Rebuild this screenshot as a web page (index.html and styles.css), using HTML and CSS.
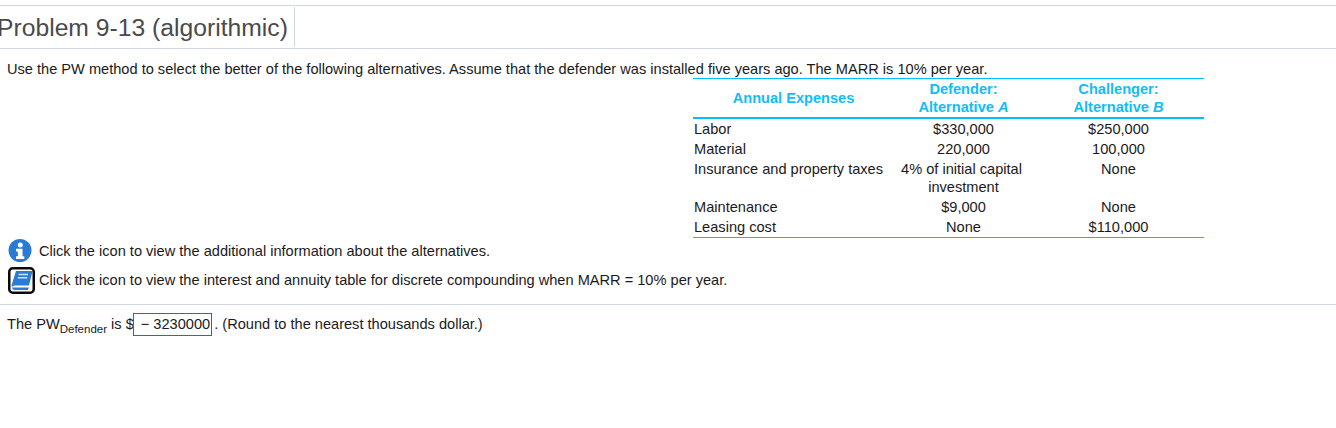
FILE: index.html
```html
<!DOCTYPE html>
<html>
<head>
<meta charset="utf-8">
<title>Problem 9-13</title>
<link rel="stylesheet" href="styles.css">
</head>
<body>
<header class="head">
  <h1 class="title">Problem 9-13 (algorithmic)</h1>
</header>
<main class="content">
  <p class="intro">Use the PW method to select the better of the following alternatives. Assume that the defender was installed five years ago. The MARR is 10% per year.</p>
  <div class="table-row">
    <table class="data">
      <thead>
        <tr>
          <th class="c1">Annual Expenses</th>
          <th class="c2">Defender:<br>Alternative <i>A</i></th>
          <th class="c3">Challenger:<br>Alternative <i>B</i></th>
        </tr>
      </thead>
      <tbody>
        <tr><td class="c1">Labor</td><td class="c2">$330,000</td><td class="c3">$250,000</td></tr>
        <tr><td class="c1">Material</td><td class="c2">220,000</td><td class="c3">100,000</td></tr>
        <tr class="tall"><td class="c1">Insurance and property taxes</td><td class="c2">4% of initial capital&nbsp;<br>investment</td><td class="c3">None</td></tr>
        <tr><td class="c1">Maintenance</td><td class="c2">$9,000</td><td class="c3">None</td></tr>
        <tr><td class="c1">Leasing cost</td><td class="c2">None</td><td class="c3">$110,000</td></tr>
      </tbody>
    </table>
  </div>
  <div class="note note-info">
    <svg class="icon" width="24" height="24" viewBox="0 0 24 24"><circle cx="12" cy="11.500" r="11.500" fill="#2a7bd4"/><circle cx="12.300" cy="6" r="2.500" fill="#fff"/><path d="M8 9.800h6.500v7.500h1.800V20H8v-2.700h1.900v-4.800H8z" fill="#fff"/></svg>
    <span>Click the icon to view the additional information about the alternatives.</span>
  </div>
  <div class="note note-book">
    <svg class="icon" width="27" height="27" viewBox="0 0 27 27"><rect x="1.250" y="1.250" width="24.500" height="24.500" rx="3.500" fill="#fff" stroke="#0a0a0a" stroke-width="2.500"/><path d="M8 4H24.500L21 18.500H6.500Q4.800 18.500 4 20L3.500 18.500z" fill="#2a7bd4"/><path d="M4 20.500Q4.300 23 6.500 23H20L20.800 20.500z" fill="#2a7bd4"/><path d="M10.500 7.500h9.500M9.800 10.800h9.500" stroke="#cfe2f7" stroke-width="1.500"/></svg>
    <span>Click the icon to view the interest and annuity table for discrete compounding when MARR = 10% per year.</span>
  </div>
  <hr class="rule">
  <p class="answer">The PW<sub>Defender</sub> is $<span class="box">− 3230000</span>. (Round to the nearest thousands dollar.)</p>
</main>
</body>
</html>
```
FILE: styles.css
```css
html, body {
  margin: 0;
  padding: 0;
  background: #fff;
  height: 428px;
  overflow: hidden;
}
body {
  font-family: "Liberation Sans", Arial, sans-serif;
  font-size: 14.600px;
  color: #1a1a1a;
  padding-top: 5px;
  box-sizing: border-box;
}
.head {
  border-top: 1px solid #d2d6e2;
  border-bottom: 1px solid #d2d6e2;
  height: 42px;
  box-sizing: content-box;
  display: flex;
  align-items: stretch;
}
.title {
  margin: 1px 0 0 -3px;
  padding: 0 6px 0 0;
  font-size: 24.700px;
  font-weight: 400;
  color: #4a4a4a;
  line-height: 41px;
  height: 40px;
  border-right: 1px solid #d2d6e2;
}
.content { padding: 0; }
.intro {
  margin: 0;
  padding: 12px 0 0 7px;
  line-height: 17px;
  height: 17px;
}
.table-row {
  display: flex;
  justify-content: flex-start;
  padding-left: 693px;
}
.data {
  border-collapse: collapse;
  width: 511px;
  table-layout: fixed;
  border-top: 1px solid #00bfff;
  border-bottom: 1px solid #00bfff;
}
.data th {
  color: #12bdf5;
  font-weight: 700;
  text-align: center;
  line-height: 18px;
  padding: 1px 0 1px;
  border-bottom: 2px solid #00bfff;
}
.data td {
  padding: 1px 0;
  line-height: 18px;
  text-align: center;
  vertical-align: top;
}
.data td.c1 { text-align: left; padding-left: 1px; white-space: nowrap; }
.c1 { width: 201px; }
.c2 { width: 139px; }
.c3 { width: 171px; }
.note {
  display: flex;
  align-items: center;
  padding-left: 8px;
  gap: 7px;
}
.note-info { height: 26px; }
.note-book { height: 32px; padding-left: 8px; gap: 4px; }
.icon { flex: none; }
.rule {
  border: 0;
  border-top: 1px solid #d2d6e2;
  margin: 8px 0 0;
  height: 0;
}
.answer {
  margin: 0;
  padding: 8px 0 0 7px;
  line-height: 20px;
}
.answer sub {
  font-size: 11.500px;
  vertical-align: -4px;
  line-height: 0;
}
.box {
  display: inline-block;
  border: 1px solid #1a7a96;
  padding: 0 1px 0 7px;
  line-height: 21px;
  margin: 0 2px 0 -1px;
}
```
